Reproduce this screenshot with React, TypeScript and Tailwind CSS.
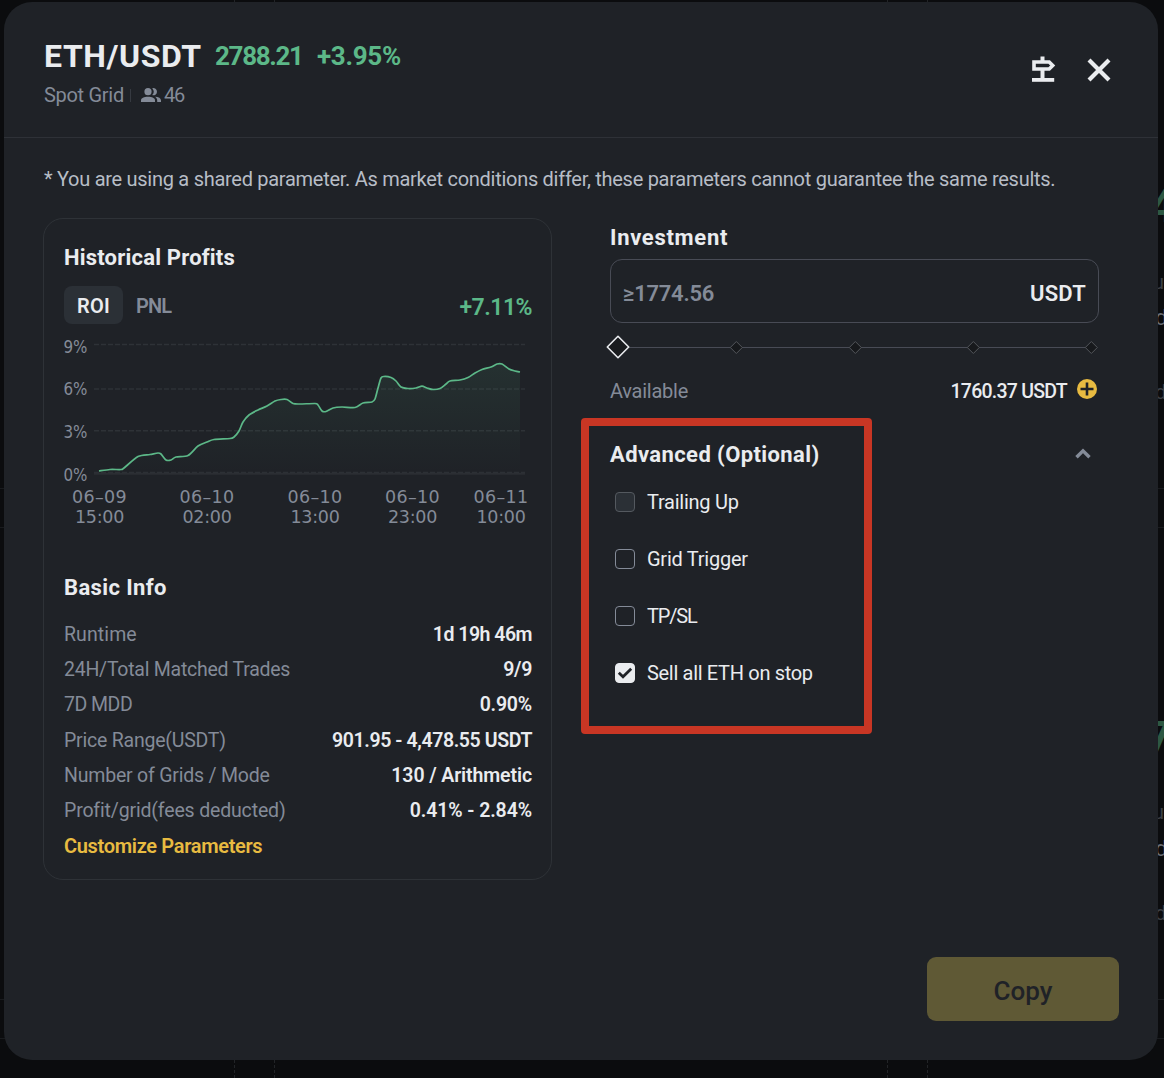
import React from 'react';
import clsx from 'clsx';

const infoRows = [
  { label: 'Runtime', value: '1d 19h 46m', labelClass: 'tracking-[0.1px]', valueClass: 'tracking-[-0.5px]' },
  { label: '24H/Total Matched Trades', value: '9/9', labelClass: 'tracking-[-0.25px]', valueClass: 'tracking-[-0.3px]' },
  { label: '7D MDD', value: '0.90%', labelClass: 'tracking-[-0.5px]', valueClass: 'tracking-[-0.2px]' },
  { label: 'Price Range(USDT)', value: '901.95 - 4,478.55 USDT', labelClass: 'tracking-[-0.22px]', valueClass: 'tracking-[-0.4px]' },
  { label: 'Number of Grids / Mode', value: '130 / Arithmetic', labelClass: 'tracking-[-0.2px]', valueClass: 'tracking-[-0.1px]' },
  { label: 'Profit/grid(fees deducted)', value: '0.41% - 2.84%', labelClass: 'tracking-[-0.16px]', valueClass: 'tracking-[-0.1px]' },
];

const options = [
  { label: 'Trailing Up', disabled: true, checked: false, className: 'tracking-[-0.25px]' },
  { label: 'Grid Trigger', disabled: false, checked: false, className: 'tracking-[-0.25px]' },
  { label: 'TP/SL', disabled: false, checked: false, className: 'tracking-[-1.2px]' },
  { label: 'Sell all ETH on stop', disabled: false, checked: true, className: 'tracking-[-0.32px]' },
];

const roiPoints: [number, number][] = [
  [35, 141], [46, 139.5], [57, 139.5], [60, 138], [74, 126.5], [86, 124.5], [94, 123], [97, 124], [102, 130],
  [107, 130], [112, 127], [124, 125.5], [134, 116], [143, 112], [150, 109.5], [166, 108.5], [170, 107], [175, 101],
  [179, 92], [185, 85], [194, 80], [203, 76], [211, 71], [217, 69.5], [223, 69.5], [229, 73.5], [236, 74],
  [251, 73.5], [254, 75], [258, 81], [262, 81.5], [269, 78], [278, 77], [291, 77.5], [299, 73], [308, 72],
  [311, 69], [314, 58], [317, 48], [320, 46.5], [327, 47.5], [332, 51], [337, 57], [344, 58.5], [352, 58],
  [358, 56.2], [363, 58], [369, 59.5], [376, 58.5], [382, 54], [386, 51], [396, 50], [404, 47.5], [411, 43],
  [418, 39.5], [427, 37], [433, 34], [438, 34], [445, 39], [451, 41], [456, 42],
];

const yTicks = [
  { label: '9%', grid: 14.5, text: 23.3 },
  { label: '6%', grid: 59, text: 65.3 },
  { label: '3%', grid: 100.8, text: 108.3 },
  { label: '0%', grid: 142.5, text: 151 },
];

const xTicks = [
  { date: '06–09', time: '15:00', x: 35.5 },
  { date: '06–10', time: '02:00', x: 143 },
  { date: '06–10', time: '13:00', x: 251 },
  { date: '06–10', time: '23:00', x: 348.5 },
  { date: '06–11', time: '10:00', x: 437 },
];

// Catmull-Rom through the points, as cubic segments
const smoothPath = (points: [number, number][]) => {
  let d = `M${points[0][0]} ${points[0][1]}`;
  for (let i = 0; i < points.length - 1; i++) {
    const p0 = points[i - 1] || points[i];
    const p1 = points[i];
    const p2 = points[i + 1];
    const p3 = points[i + 2] || p2;
    d += `C${p1[0] + (p2[0] - p0[0]) / 7} ${p1[1] + (p2[1] - p0[1]) / 7} ${p2[0] - (p3[0] - p1[0]) / 7} ${p2[1] - (p3[1] - p1[1]) / 7} ${p2[0]} ${p2[1]}`;
  }
  return d;
};

function RoiChart() {
  const line = smoothPath(roiPoints);

  return (
    <svg width="468" height="200" viewBox="0 0 468 200" className="block">
      <defs>
        <linearGradient id="roiFill" x1="0" y1="0" x2="0" y2="1">
          <stop offset="0" stopColor="#5cb888" stopOpacity="0.1" />
          <stop offset="1" stopColor="#5cb888" stopOpacity="0" />
        </linearGradient>
      </defs>
      {yTicks.map((tick) => (
        <line key={tick.label} x1="30" x2="461" y1={tick.grid} y2={tick.grid} stroke="#2e3237" strokeWidth="1.5" strokeDasharray="5 2" />
      ))}
      <line x1="30" x2="461" y1="143.7" y2="143.7" stroke="#2b2e33" strokeWidth="2" />
      <path d={`${line}L456 142L35 142Z`} fill="url(#roiFill)" />
      <path d={line} fill="none" stroke="#5cb888" strokeWidth="1.7" />
      <g fill="#848b98" fontSize="17.5" fontFamily="'DejaVu Sans', sans-serif">
        {yTicks.map((tick) => (
          <text key={tick.label} x="-0.5" y={tick.text} textLength="24" lengthAdjust="spacingAndGlyphs">{tick.label}</text>
        ))}
        {xTicks.map((tick) => (
          <g key={tick.x} textAnchor="middle">
            <text x={tick.x} y="173.3" letterSpacing="0.3">{tick.date}</text>
            <text x={tick.x} y="193.3" letterSpacing="-0.3">{tick.time}</text>
          </g>
        ))}
      </g>
    </svg>
  );
}

function Checkbox({ checked, disabled }: { checked: boolean; disabled: boolean }) {
  return (
    <span
      className={clsx(
        'flex size-5 items-center justify-center rounded-[4px] border',
        checked ? 'border-[#eaecef] bg-[#eaecef]' : disabled ? 'border-[#54595f] bg-[#2b3036]' : 'border-[#848b98]',
      )}
    >
      {checked && (
        <svg width="16" height="12" viewBox="0 0 16 12" fill="none" className="shrink-0">
          <path d="M1.8 5.8L6 9.8L14.2 1.8" stroke="#1f2227" strokeWidth="2.8" />
        </svg>
      )}
    </span>
  );
}

function Slider() {
  return (
    <svg width="500" height="26" viewBox="0 0 500 26" className="-ml-1 block">
      <path d="M12 13.5H485" stroke="#484b55" strokeWidth="1" />
      {[130.3, 249.3, 367.3, 485.3].map((x) => (
        <path key={x} d={`M${x - 6} 13.5L${x} 7.5L${x + 6} 13.5L${x} 19.5Z`} fill="#17191c" stroke="#53565b" strokeWidth="1" />
      ))}
      <path d="M1.3 13L12 2.3L22.7 13L12 23.7Z" fill="#191b1e" stroke="#eaecef" strokeWidth="1.6" strokeLinejoin="round" />
    </svg>
  );
}

function Header() {
  return (
    <div className="flex h-[136px] justify-between border-b border-[#2e3137] pl-[40px] pr-[47px]">
      <div className="pt-[34px]">
        <div className="flex h-10 items-center font-bold">
          <h1 className="w-[171px] text-[32px] leading-10 tracking-[0.6px] text-[#eaecef]">ETH/USDT</h1>
          <span className="w-[102px] text-[26px] leading-10 tracking-[-1.35px] text-[#5cb888]">2788.21</span>
          <span className="text-[26px] leading-10 tracking-[-0.3px] text-[#5cb888]">+3.95%</span>
        </div>
        <div className="mt-[3px] flex h-8 items-center text-[20px] text-[#848b98]">
          <span className="w-[86px] tracking-[-0.3px]">Spot Grid</span>
          <span className="h-[13px] w-px bg-[#363a41]" />
          <svg width="20" height="14" viewBox="0 0 20 14" fill="currentColor" className="ml-[10px] mb-px">
            <circle cx="7" cy="3.7" r="3.6" />
            <path d="M0 14V12.5C0 10 3 8.8 7 8.8S14 10 14 12.5V14Z" />
            <path d="M11.2 0.3A3.6 3.6 0 1 1 11.2 7.1A5 5 0 0 0 11.2 0.3Z" />
            <path d="M14 8.8C17.7 9 20 10.2 20 12.6V14H16.2V12.5C16.2 11 15.5 9.7 14 8.8Z" />
          </svg>
          <span className="ml-[3px] tracking-[-1.2px]">46</span>
        </div>
      </div>
      <div className="flex h-[136px] items-center gap-[31px] text-[#eaecef]">
        <svg width="24" height="26" viewBox="0 0 24 26" fill="none" stroke="currentColor" className="mb-0.5">
          <path d="M2 6H17.2L20.7 9.5L17.2 13H2Z" strokeWidth="3.6" />
          <path d="M10.5 0.5V5M10.5 13V23" strokeWidth="4" />
          <path d="M0 23.9H22.2" strokeWidth="3.8" />
        </svg>
        <svg width="24" height="24" viewBox="0 0 24 24" fill="none" stroke="currentColor" strokeWidth="4.2">
          <path d="M2 2L22 22M22 2L2 22" />
        </svg>
      </div>
    </div>
  );
}

function ProfitCard() {
  return (
    <section className="h-[662px] w-[509px] rounded-[20px] border border-[#2e3237] px-5">
      <h2 className="mt-[23px] text-[22px] font-bold leading-8 tracking-[0.2px] text-[#eaecef]">Historical Profits</h2>
      <div className="mt-[12px] flex h-[38px] items-center text-[20px] font-semibold">
        <span className="flex h-[38px] w-[59px] items-center justify-center rounded-lg bg-[#2b3036] pt-0.5 tracking-[0.3px] text-[#eaecef]">ROI</span>
        <span className="ml-[13px] pt-0.5 tracking-[-0.9px] text-[#848b98]">PNL</span>
        <span className="-mr-px ml-auto pt-[6px] text-[23px] tracking-[-0.5px] text-[#5cb888]">+7.11%</span>
      </div>
      <div className="mt-[6px]">
        <RoiChart />
      </div>
      <h2 className="mt-[42px] text-[22px] font-bold leading-8 tracking-[0.4px] text-[#eaecef]">Basic Info</h2>
      <dl className="mt-[13px]">
        {infoRows.map((row) => (
          <div key={row.label} className="flex h-[35.2px] items-center justify-between text-[19.5px]">
            <dt className={clsx('text-[#848b98]', row.labelClass)}>{row.label}</dt>
            <dd className={clsx('-mr-px font-semibold text-[#eaecef]', row.valueClass)}>{row.value}</dd>
          </div>
        ))}
      </dl>
      <a className="mt-[2px] block text-[20px] font-semibold leading-8 tracking-[-0.32px] text-[#e8bb41]">Customize Parameters</a>
    </section>
  );
}

function InvestmentForm() {
  return (
    <section className="ml-[58px] w-[489px]">
      <h2 className="mt-[4px] text-[22px] font-bold leading-8 tracking-[0.7px] text-[#eaecef]">Investment</h2>
      <div className="mt-[5px] flex h-16 items-center justify-between rounded-xl border border-[#484b55] px-3 pt-1 text-[22px] font-semibold">
        <span className="tracking-[-0.25px] text-[#848b98]">≥1774.56</span>
        <span className="tracking-[0.2px] text-[#eaecef]">USDT</span>
      </div>
      <div className="mt-[11px]">
        <Slider />
      </div>
      <div className="mt-[15px] flex h-8 items-center text-[20px]">
        <span className="tracking-[-0.25px] text-[#848b98]">Available</span>
        <span className="ml-auto pt-0.5 text-[19.5px] font-medium tracking-[-0.75px] text-[#eaecef]">1760.37 USDT</span>
        <svg width="20" height="20" viewBox="0 0 20 20" className="mb-1 ml-[10px] mr-0.5">
          <circle cx="10" cy="10" r="10" fill="#e8bb41" />
          <path d="M10 3.5V16.5M3.5 10H16.5" stroke="#1f2227" strokeWidth="2.6" />
        </svg>
      </div>

      <div className="relative mt-[31px]">
        <div className="pointer-events-none absolute -left-[29px] -top-[20px] h-[316px] w-[291px] rounded-[4px] border-8 border-[#c83624]" />
        <div className="flex h-8 items-center justify-between pr-2">
          <h2 className="text-[22px] font-bold tracking-[0.4px] text-[#eaecef]">Advanced (Optional)</h2>
          <svg width="16" height="12" viewBox="0 0 16 12" fill="none">
            <path d="M1.5 9.3L8 2.8L14.5 9.3" stroke="#848b98" strokeWidth="3.4" />
          </svg>
        </div>
        <ul className="mt-[3px] pl-[5px]">
          {options.map((option) => (
            <li key={option.label} className="flex h-[57px] items-center">
              <Checkbox checked={option.checked} disabled={option.disabled} />
              <span className={clsx('ml-3 pt-px text-[20px] text-[#eaecef]', option.className)}>{option.label}</span>
            </li>
          ))}
        </ul>
      </div>
    </section>
  );
}

// Dimmed page that stays visible round the dialog
function Backdrop() {
  return (
    <div className="absolute inset-0 text-[20px] text-[#3b3f45]">
      {['top-[488px]', 'top-[527px]', 'top-[999px]', 'top-[1038px]'].map((top) => (
        <div key={top} className={clsx('absolute inset-x-0 h-px bg-[#191b1e]', top)} />
      ))}
      {['left-[234px]', 'left-[274px]', 'left-[887px]', 'left-[927px]'].map((left) => (
        <div key={left} className={clsx('absolute inset-y-0 border-l border-dashed border-[#222427]', left)} />
      ))}
      <span className="absolute left-[1149px] top-[182px] text-[46px] font-bold leading-[48px] text-[#2d5843]">4</span>
      <span className="absolute left-[1153px] top-[267px]">u</span>
      <span className="absolute left-[1155px] top-[301px] text-[22px] text-[#666b74]">d</span>
      <span className="absolute left-[1155px] top-[377px]">d</span>
      <span className="absolute left-[1145px] top-[714px] text-[46px] font-bold leading-[48px] text-[#2d5843]">7</span>
      <span className="absolute left-[1153px] top-[797px]">u</span>
      <span className="absolute left-[1155px] top-[832px] text-[22px] text-[#666b74]">d</span>
      <span className="absolute left-[1155px] top-[898px]">d</span>
    </div>
  );
}

export default function App() {
  return (
    <div className="relative h-[1078px] w-[1164px] overflow-hidden bg-[#0b0c0e] pl-1 pt-0.5 font-[Roboto,sans-serif]">
      <Backdrop />
      <div className="relative flex h-[1058px] w-[1154px] flex-col rounded-[28px] bg-[#1f2227]">
        <Header />
        <div className="flex-1 px-[39px]">
          <p className="ml-px mt-[25px] whitespace-nowrap text-[20px] leading-8 tracking-[-0.28px] text-[#b7bdc6]">
            * You are using a shared parameter. As market conditions differ, these parameters cannot guarantee the same results.
          </p>
          <div className="mt-[23px] flex">
            <ProfitCard />
            <InvestmentForm />
          </div>
        </div>
        <div className="flex justify-end pb-[39px] pr-[39px]">
          <button className="h-16 w-48 rounded-[9px] bg-[#5f5935] pt-1 text-[26px] font-medium text-[#1f2227]">Copy</button>
        </div>
      </div>
    </div>
  );
}
